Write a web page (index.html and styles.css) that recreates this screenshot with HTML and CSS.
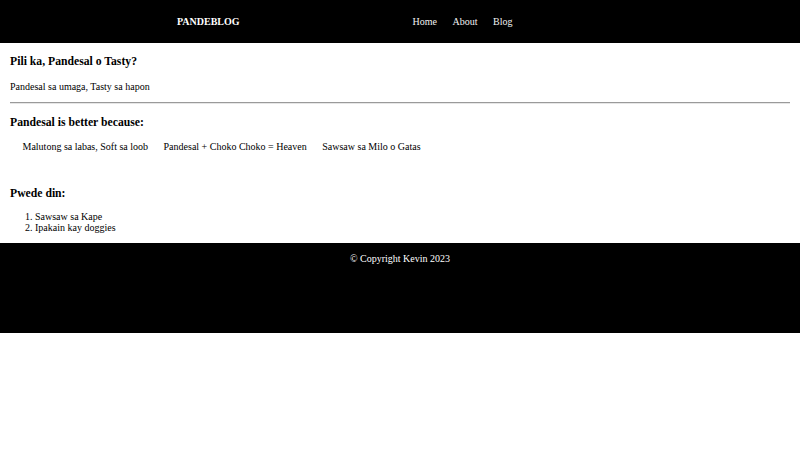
FILE: index.html
```html
<!DOCTYPE html>
<html lang="tl">
<head>
<meta charset="utf-8">
<title>Pandeblog</title>
<link rel="stylesheet" href="styles.css">
</head>
<body>
<header class="site-header">
  <div class="logo">PANDEBLOG</div>
  <nav class="nav">
    <a href="#">Home</a>
    <a href="#">About</a>
    <a href="#">Blog</a>
  </nav>
</header>
<main class="content">
  <h3 class="heading">Pili ka, Pandesal o Tasty?</h3>
  <p class="text">Pandesal sa umaga, Tasty sa hapon</p>
  <hr class="divider">
  <h3 class="heading">Pandesal is better because:</h3>
  <ul class="reasons">
    <li>Malutong sa labas, Soft sa loob</li>
    <li>Pandesal + Choko Choko = Heaven</li>
    <li>Sawsaw sa Milo o Gatas</li>
  </ul>
  <h3 class="heading heading-tight">Pwede din:</h3>
  <ol class="extras">
    <li>Sawsaw sa Kape</li>
    <li>Ipakain kay doggies</li>
  </ol>
</main>
<footer class="site-footer">
  <p class="copy">© Copyright Kevin 2023</p>
</footer>
</body>
</html>
```
FILE: styles.css
```css
html, body {
  margin: 0;
  padding: 0;
  background: #fff;
}
body {
  font-family: "Liberation Serif", "Times New Roman", serif;
  font-size: 10px;
  color: #000;
}
.site-header {
  background: #000;
  color: #fff;
  height: 43px;
  display: flex;
  align-items: center;
  padding-left: 177px;
}
.logo {
  font-weight: bold;
  font-size: 10px;
}
.nav {
  display: flex;
  gap: 15.5px;
  margin-left: 173px;
}
.nav a {
  color: #f2f2f2;
  text-decoration: none;
}
.content {
  padding: 0 10px;
  display: flow-root;
}
.heading {
  font-size: 11.7px;
  font-weight: bold;
  margin: 11.7px 0;
}
.heading-tight {
  margin-bottom: 10.7px;
}
.text {
  margin: 13.2px 0 10px;
}
.divider {
  margin: 5px 0;
  border: 0;
  border-top: 1px solid #9a9a9a;
  border-bottom: 1px solid #e6e6e6;
  height: 0;
}
.reasons {
  list-style: none;
  display: flex;
  gap: 15.5px;
  margin: 12.2px 0 35.5px;
  padding: 0 0 0 12.5px;
}
.extras {
  margin: 10px 0;
  padding-left: 25px;
}
.site-footer {
  background: #000;
  color: #fff;
  height: 90px;
  text-align: center;
  display: flow-root;
}
.copy {
  margin: 10px 0;
}
```
